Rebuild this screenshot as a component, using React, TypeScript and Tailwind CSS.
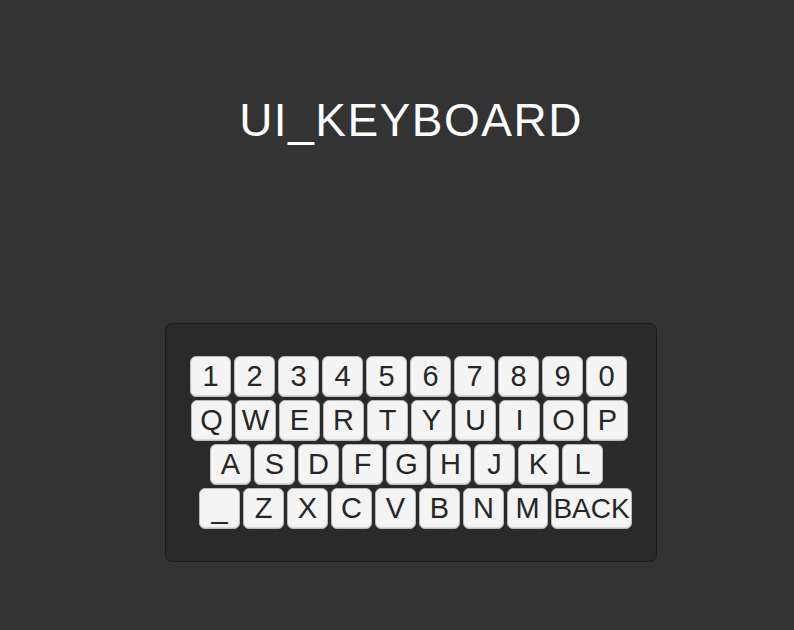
const rows = [
  { keys: ["1", "2", "3", "4", "5", "6", "7", "8", "9", "0"], pad: "pl-[24px]" },
  { keys: ["Q", "W", "E", "R", "T", "Y", "U", "I", "O", "P"], pad: "pl-[25px]" },
  { keys: ["A", "S", "D", "F", "G", "H", "J", "K", "L"], pad: "pl-[44px]" },
  { keys: ["_", "Z", "X", "C", "V", "B", "N", "M", "BACK"], pad: "pl-[33px]" },
];

const Key = ({ label }: { label: string }) => {
  const wide = label === "BACK";
  return (
    <button
      className={
        "flex h-[41px] items-center justify-center rounded-[6px] border border-[#b9b9b9] bg-[#f4f4f4] leading-none text-[#262626] shadow-[inset_0_-1px_0_#d6d6d6] " +
        (wide ? "w-[81px] text-[28px]" : "w-[41px] text-[29px]")
      }
    >
      {label}
    </button>
  );
};

const App = () => {
  return (
    <div className="h-[630px] w-[794px] overflow-hidden bg-[#333333] font-['Liberation_Sans',Arial,sans-serif]">
      <div className="ml-[165px] flex w-[492px] flex-col items-center">
        <h1 className="mt-[97px] text-[46px] font-normal leading-none tracking-[1.5px] text-white">
          UI_KEYBOARD
        </h1>
        <div className="mt-[180px] h-[239px] w-[492px] rounded-[7px] border border-[#1c1c1c] bg-[#2b2a2a]">
          <div className="flex flex-col gap-[3px] pt-[32px]">
            {rows.map((row, i) => (
              <div key={i} className={"flex gap-[3px] " + row.pad}>
                {row.keys.map((k) => (
                  <Key key={k} label={k} />
                ))}
              </div>
            ))}
          </div>
        </div>
      </div>
    </div>
  );
};

export default App;
